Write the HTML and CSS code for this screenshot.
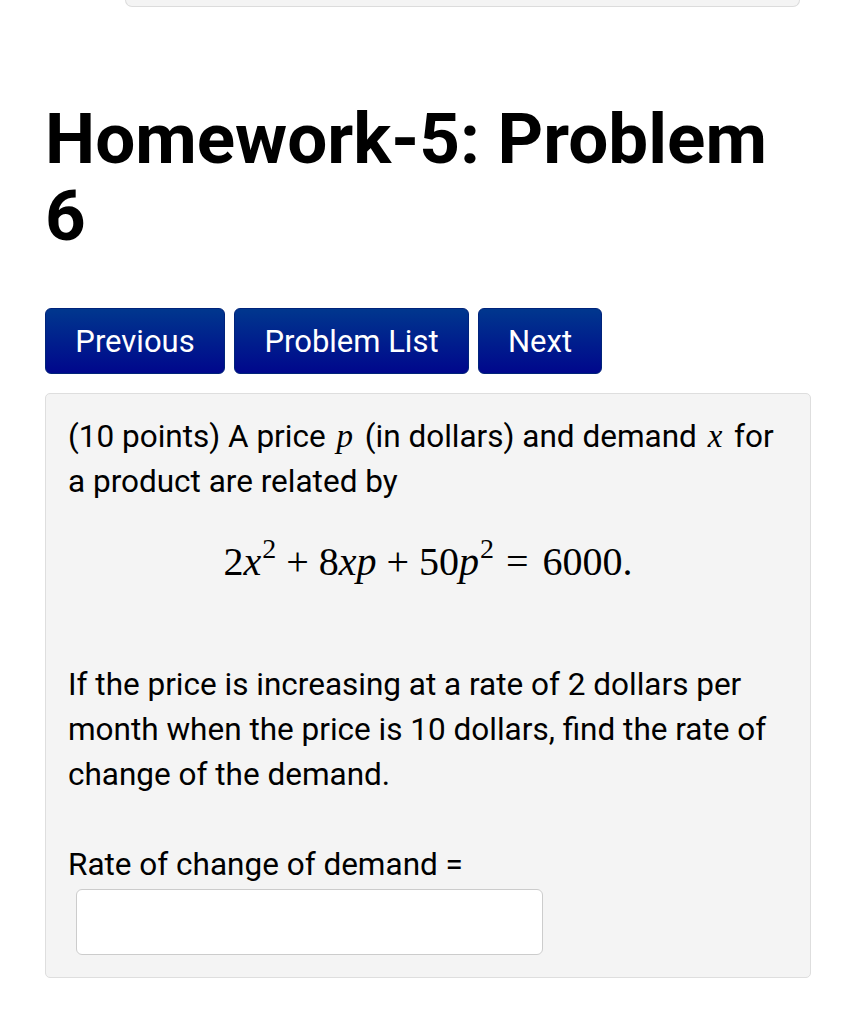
FILE: index.html
```html
<!DOCTYPE html>
<html>
<head>
<meta charset="utf-8">
<link rel="stylesheet" href="styles.css">
</head>
<body>
<div class="page">
  <div class="topcard"></div>
  <h1 class="title">Homework-5: Problem 6</h1>
  <div class="nav">
    <a class="btn btn-prev">Previous</a>
    <a class="btn btn-list">Problem List</a>
    <a class="btn btn-next">Next</a>
  </div>
  <div class="panel">
    <p class="para">(10 points) A price <span class="mi">p</span> (in dollars) and demand <span class="mi">x</span> for a product are related by</p>
    <div class="eq"><span class="mn">2</span><span class="mi">x</span><sup class="sup">2</sup><span class="mo">+</span><span class="mn">8</span><span class="mi">xp</span><span class="mo">+</span><span class="mn">50</span><span class="mi">p</span><sup class="sup">2</sup><span class="mo eqs">=</span><span class="mn">6000.</span></div>
    <p class="para para2">If the price is increasing at a rate of 2 dollars per month when the price is 10 dollars, find the rate of change of the demand.</p>
    <p class="para label">Rate of change of demand =</p>
    <div class="answer"></div>
  </div>
</div>
</body>
</html>
```
FILE: styles.css
```css
html, body {
  margin: 0;
  padding: 0;
  background: #ffffff;
}
body {
  font-family: Roboto, "Liberation Sans", sans-serif;
  color: #000;
}
.page {
  width: 860px;
  height: 1024px;
  overflow: hidden;
  padding-left: 45px;
  box-sizing: border-box;
}
.topcard {
  margin-left: 80px;
  width: 675px;
  height: 7px;
  box-sizing: border-box;
  background: #f4f4f4;
  border: 1px solid #dcdcdc;
  border-top: none;
  border-radius: 0 0 8px 8px;
}
.title {
  margin: 93px 0 0 0;
  font-size: 71px;
  line-height: 77px;
  font-weight: 700;
  width: 760px;
}
.nav {
  display: flex;
  gap: 9px;
  margin-top: 54px;
}
.btn {
  display: flex;
  align-items: center;
  justify-content: center;
  height: 66px;
  box-sizing: border-box;
  border-radius: 6px;
  color: #fff;
  font-size: 31px;
  background: linear-gradient(#00378e, #00078c);
  border: 1px solid #00237a;
}
.btn-prev { width: 180px; }
.btn-list { width: 235px; }
.btn-next { width: 124px; }
.panel {
  margin-top: 19px;
  width: 766px;
  height: 585px;
  box-sizing: border-box;
  background: #f4f4f4;
  border: 1px solid #dedede;
  border-radius: 5px;
  padding: 19.5px 22px 0 22px;
}
.para {
  margin: 0;
  font-size: 31.5px;
  line-height: 45px;
}
.mi {
  font-family: "Liberation Serif", serif;
  font-style: italic;
}
.para .mi { font-size: 33px; margin: 0 4px 0 3px; }
.eq {
  margin-top: 35.5px;
  text-align: center;
  font-family: "Liberation Serif", serif;
  font-size: 40px;
  line-height: 45px;
  height: 45px;
}
.mo { padding: 0 10px; }
.eqs { padding: 0 14px 0 12px; }
.sup {
  font-size: 28px;
  vertical-align: 17px;
  line-height: 0;
  margin-left: 1px;
}
.para2 { margin-top: 77.5px; }
.label { margin-top: 45px; }
.answer {
  margin: 2.5px 0 0 8px;
  width: 467px;
  height: 66px;
  box-sizing: border-box;
  background: #fff;
  border: 1px solid #cccccc;
  border-radius: 6px;
}
```
